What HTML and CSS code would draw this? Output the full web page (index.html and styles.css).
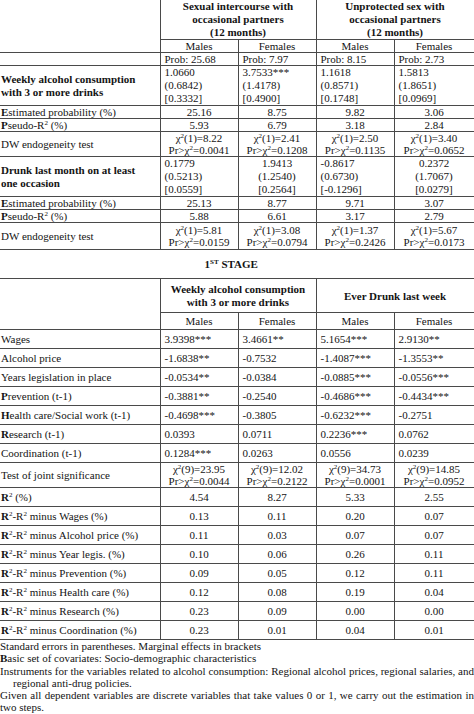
FILE: index.html
```html
<!DOCTYPE html>
<html>
<head>
<meta charset="utf-8">
<link rel="stylesheet" href="styles.css">
</head>
<body>
<table class="t">
<colgroup><col class="c1"><col class="c2"><col class="c3"><col class="c4"><col class="c5"></colgroup>
<tr class="hrow">
  <td rowspan="2" class="first notop"></td>
  <td colspan="2" class="hd notop">Sexual intercourse with<br>occasional partners<br>(12 months)</td>
  <td colspan="2" class="hd notop">Unprotected sex with<br>occasional partners<br>(12 months)</td>
</tr>
<tr class="r13"><td class="ctr">Males</td><td class="ctr">Females</td><td class="ctr">Males</td><td class="ctr">Females</td></tr>
<tr class="r13"><td class="first"></td><td>Prob: 25.68</td><td>Prob: 7.97</td><td>Prob: 8.15</td><td>Prob: 2.73</td></tr>
<tr class="r3"><td class="first bold">Weekly alcohol consumption<br>with 3 or more drinks</td><td>1.0660<br>(0.6842)<br>[0.3332]</td><td>3.7533***<br>(1.4178)<br>[0.4900]</td><td>1.1618<br>(0.8571)<br>[0.1748]</td><td>1.5813<br>(1.8651)<br>[0.0969]</td></tr>
<tr class="r13"><td class="first"><b>E</b>stimated probability (%)</td><td class="ctr">25.16</td><td class="ctr">8.75</td><td class="ctr">9.82</td><td class="ctr">3.06</td></tr>
<tr class="r13"><td class="first"><b>P</b>seudo-R<sup>2</sup> (%)</td><td class="ctr">5.93</td><td class="ctr">6.79</td><td class="ctr">3.18</td><td class="ctr">2.84</td></tr>
<tr class="r2"><td class="first">DW endogeneity test</td><td class="ctr">χ<sup>2</sup>(1)=8.22<br>Pr&gt;χ<sup>2</sup>=0.0041</td><td class="ctr">χ<sup>2</sup>(1)=2.41<br>Pr&gt;χ<sup>2</sup>=0.1208</td><td class="ctr">χ<sup>2</sup>(1)=2.50<br>Pr&gt;χ<sup>2</sup>=0.1135</td><td class="ctr">χ<sup>2</sup>(1)=3.40<br>Pr&gt;χ<sup>2</sup>=0.0652</td></tr>
<tr class="r3"><td class="first bold">Drunk last month on at least<br>one occasion</td><td>0.1779<br>(0.5213)<br>[0.0559]</td><td class="ctr">1.9413<br>(1.2540)<br>[0.2564]</td><td>-0.8617<br>(0.6730)<br>[-0.1296]</td><td class="ctr">0.2372<br>(1.7067)<br>[0.0279]</td></tr>
<tr class="r13"><td class="first"><b>E</b>stimated probability (%)</td><td class="ctr">25.13</td><td class="ctr">8.77</td><td class="ctr">9.71</td><td class="ctr">3.07</td></tr>
<tr class="r13"><td class="first"><b>P</b>seudo-R<sup>2</sup> (%)</td><td class="ctr">5.88</td><td class="ctr">6.61</td><td class="ctr">3.17</td><td class="ctr">2.79</td></tr>
<tr class="r2 r2b"><td class="first">DW endogeneity test</td><td class="ctr">χ<sup>2</sup>(1)=5.81<br>Pr&gt;χ<sup>2</sup>=0.0159</td><td class="ctr">χ<sup>2</sup>(1)=3.08<br>Pr&gt;χ<sup>2</sup>=0.0794</td><td class="ctr">χ<sup>2</sup>(1)=1.37<br>Pr&gt;χ<sup>2</sup>=0.2426</td><td class="ctr">χ<sup>2</sup>(1)=5.67<br>Pr&gt;χ<sup>2</sup>=0.0173</td></tr>
<tr class="stage"><td colspan="5" class="first bold ctr">1<sup>ST</sup> STAGE</td></tr>
<tr class="h2row">
  <td rowspan="2" class="first"></td>
  <td colspan="2" class="bold ctr">Weekly alcohol consumption<br>with 3 or more drinks</td>
  <td colspan="2" class="bold ctr">Ever Drunk last week</td>
</tr>
<tr class="m2"><td class="ctr">Males</td><td class="ctr">Females</td><td class="ctr">Males</td><td class="ctr">Females</td></tr>
<tr class="r19"><td class="first">Wages</td><td>3.9398***</td><td>3.4661**</td><td>5.1654***</td><td>2.9130**</td></tr>
<tr class="r19"><td class="first">Alcohol price</td><td>-1.6838**</td><td>-0.7532</td><td>-1.4087***</td><td>-1.3553**</td></tr>
<tr class="r19"><td class="first">Years legislation in place</td><td>-0.0534**</td><td>-0.0384</td><td>-0.0885***</td><td>-0.0556***</td></tr>
<tr class="r19"><td class="first"><b>P</b>revention (t-1)</td><td>-0.3881**</td><td>-0.2540</td><td>-0.4686***</td><td>-0.4434***</td></tr>
<tr class="r19"><td class="first"><b>H</b>ealth care/Social work (t-1)</td><td>-0.4698***</td><td>-0.3805</td><td>-0.6232***</td><td>-0.2751</td></tr>
<tr class="r19"><td class="first"><b>R</b>esearch (t-1)</td><td>0.0393</td><td>0.0711</td><td>0.2236***</td><td>0.0762</td></tr>
<tr class="r19"><td class="first">Coordination (t-1)</td><td>0.1284***</td><td>0.0263</td><td>0.0556</td><td>0.0239</td></tr>
<tr class="r2"><td class="first">Test of joint significance</td><td class="ctr">χ<sup>2</sup>(9)=23.95<br>Pr&gt;χ<sup>2</sup>=0.0044</td><td class="ctr">χ<sup>2</sup>(9)=12.02<br>Pr&gt;χ<sup>2</sup>=0.2122</td><td class="ctr">χ<sup>2</sup>(9)=34.73<br>Pr&gt;χ<sup>2</sup>=0.0001</td><td class="ctr">χ<sup>2</sup>(9)=14.85<br>Pr&gt;χ<sup>2</sup>=0.0952</td></tr>
<tr class="r19"><td class="first"><b>R</b><sup>2</sup> (%)</td><td class="ctr">4.54</td><td class="ctr">8.27</td><td class="ctr">5.33</td><td class="ctr">2.55</td></tr>
<tr class="r19"><td class="first"><b>R</b><sup>2</sup>-R<sup>2</sup> minus Wages (%)</td><td class="ctr">0.13</td><td class="ctr">0.11</td><td class="ctr">0.20</td><td class="ctr">0.07</td></tr>
<tr class="r19"><td class="first"><b>R</b><sup>2</sup>-R<sup>2</sup> minus Alcohol price (%)</td><td class="ctr">0.11</td><td class="ctr">0.03</td><td class="ctr">0.07</td><td class="ctr">0.07</td></tr>
<tr class="r19"><td class="first"><b>R</b><sup>2</sup>-R<sup>2</sup> minus Year legis. (%)</td><td class="ctr">0.10</td><td class="ctr">0.06</td><td class="ctr">0.26</td><td class="ctr">0.11</td></tr>
<tr class="r19"><td class="first"><b>R</b><sup>2</sup>-R<sup>2</sup> minus Prevention (%)</td><td class="ctr">0.09</td><td class="ctr">0.05</td><td class="ctr">0.12</td><td class="ctr">0.11</td></tr>
<tr class="r19"><td class="first"><b>R</b><sup>2</sup>-R<sup>2</sup> minus Health care (%)</td><td class="ctr">0.12</td><td class="ctr">0.08</td><td class="ctr">0.19</td><td class="ctr">0.04</td></tr>
<tr class="r19"><td class="first"><b>R</b><sup>2</sup>-R<sup>2</sup> minus Research (%)</td><td class="ctr">0.23</td><td class="ctr">0.09</td><td class="ctr">0.00</td><td class="ctr">0.00</td></tr>
<tr class="r19"><td class="first"><b>R</b><sup>2</sup>-R<sup>2</sup> minus Coordination (%)</td><td class="ctr">0.23</td><td class="ctr">0.01</td><td class="ctr">0.04</td><td class="ctr">0.01</td></tr>
</table>
<div class="notes">
  <p>Standard errors in parentheses. Marginal effects in brackets</p>
  <p><b>B</b>asic set of covariates: Socio-demographic characteristics</p>
  <p class="hang">Instruments for the variables related to alcohol consumption: Regional alcohol prices, regional salaries, and regional anti-drug policies.</p>
  <p class="just">Given all dependent variables are discrete variables that take values 0 or 1, we carry out the estimation in two steps.</p>
</div>
</body>
</html>
```

FILE: styles.css
```css
html, body {
  margin: 0;
  padding: 0;
  background: #ffffff;
}
body {
  width: 474px;
  font-family: "Liberation Serif", "Times New Roman", serif;
  font-size: 11px;
  color: #141414;
}
.t {
  border-collapse: collapse;
  table-layout: fixed;
  width: 474px;
}
.c1 { width: 160px; }
.c2 { width: 78px; }
.c3 { width: 78px; }
.c4 { width: 78px; }
.c5 { width: 80px; }
.t td {
  border: 1px solid #4a4a4a;
  padding: 0 4px;
  line-height: 12px;
  vertical-align: middle;
  white-space: nowrap;
  overflow: hidden;
  text-align: left;
}
.t td.first { border-left: none; padding-left: 1px; }
.t td.notop { border-top: none; }
.t td.ctr { text-align: center; }
.t td.bold, .t td.hd { font-weight: bold; }
.t td.hd { text-align: center; line-height: 13px; }
.r3 td { line-height: 13px; }
.r2 td { line-height: 12px; }
.r2b td { padding-top: 1px; padding-bottom: 1px; }
.stage td { padding-top: 8px; padding-bottom: 8px; padding-right: 12px; }
.h2row td { line-height: 13px; padding-top: 4px; padding-bottom: 3px; }
.m2 td { padding-top: 2px; padding-bottom: 2px; }
.r19 td { padding-top: 3px; padding-bottom: 3px; }
sup {
  font-size: 7px;
  line-height: 0;
  vertical-align: 4px;
}
.notes p {
  margin: 0;
  line-height: 12.3px;
}
.notes .hang {
  padding-left: 13px;
  text-indent: -13px;
  text-align: justify;
}
.notes .just {
  text-align: justify;
}
```
